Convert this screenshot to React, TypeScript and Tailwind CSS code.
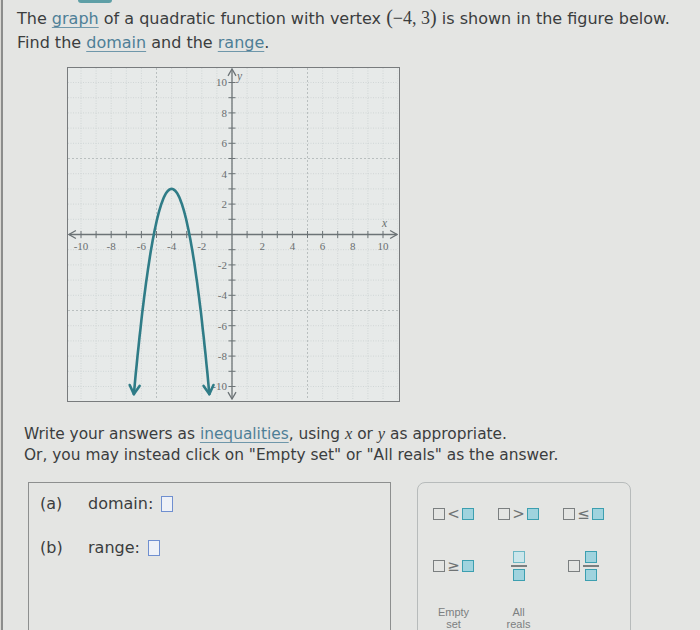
import React from "react";

const OX = 164;
const OY = 166.5;
const UX = 15.1;
const UY = 15.2;
const px = (u: number) => OX + u * UX;
const py = (v: number) => OY - v * UY;

function chevron(tx: number, ty: number, dx: number, dy: number, len: number) {
  const l = Math.hypot(dx, dy);
  const ux = dx / l;
  const uy = dy / l;
  const a = Math.PI / 6;
  const rot = (s: number) => [
    tx - len * (ux * Math.cos(s * a) - uy * Math.sin(s * a)),
    ty - len * (ux * Math.sin(s * a) + uy * Math.cos(s * a)),
  ];
  const [x1, y1] = rot(1);
  const [x2, y2] = rot(-1);
  return `M${x1.toFixed(1)} ${y1.toFixed(1)} L${tx.toFixed(1)} ${ty.toFixed(1)} L${x2.toFixed(1)} ${y2.toFixed(1)}`;
}

function Graph() {
  const f = (u: number) => 3 - 2.16 * (u + 4) * (u + 4);
  const pts: string[] = [];
  for (let i = 0; i <= 80; i++) {
    const u = -6.5 + (5 * i) / 80;
    pts.push(`${px(u).toFixed(1)} ${py(f(u)).toFixed(1)}`);
  }
  const curve = "M" + pts.join(" L");
  const lt = [px(-6.5), py(f(-6.5))];
  const lp = [px(-6.45), py(f(-6.45))];
  const rt = [px(-1.5), py(f(-1.5))];
  const rp = [px(-1.55), py(f(-1.55))];

  const units = Array.from({ length: 23 }, (_, i) => i - 11);
  const evens = [-10, -8, -6, -4, -2, 2, 4, 6, 8, 10];

  return (
    <div className="ml-[64px] mt-[12px] w-[333px] h-[335px] border-[1.5px] border-[#787b7d] bg-[#e7eae9]">
      <svg width="330" height="332" viewBox="0 0 330 332" className="block">
        {units.map((u) => (
          <line
            key={"vx" + u}
            x1={px(u)}
            y1={0}
            x2={px(u)}
            y2={332}
            stroke={Math.abs(u) === 5 ? "#b9bfbf" : "#d0d6d6"}
            strokeWidth={1}
            strokeDasharray={Math.abs(u) === 5 ? "2 2" : "1 1.5"}
          />
        ))}
        {units.map((v) => (
          <line
            key={"hy" + v}
            x1={0}
            y1={py(v)}
            x2={330}
            y2={py(v)}
            stroke={Math.abs(v) === 5 ? "#b9bfbf" : "#d0d6d6"}
            strokeWidth={1}
            strokeDasharray={Math.abs(v) === 5 ? "2 2" : "1 1.5"}
          />
        ))}
        <line x1={1} y1={OY} x2={329} y2={OY} stroke="#6c7376" strokeWidth={1.3} />
        <line x1={OX} y1={1} x2={OX} y2={331} stroke="#6c7376" strokeWidth={1.3} />
        <path d={chevron(1, OY, -1, 0, 8)} stroke="#6c7376" strokeWidth={1.3} fill="none" />
        <path d={chevron(329, OY, 1, 0, 8)} stroke="#6c7376" strokeWidth={1.3} fill="none" />
        <path d={chevron(OX, 1, 0, -1, 8)} stroke="#6c7376" strokeWidth={1.3} fill="none" />
        <path d={chevron(OX, 331, 0, 1, 8)} stroke="#6c7376" strokeWidth={1.3} fill="none" />
        {units
          .filter((u) => u !== 0 && Math.abs(u) <= 10)
          .map((u) => (
            <g key={"t" + u}>
              <line x1={px(u)} y1={OY - 3.5} x2={px(u)} y2={OY + 3.5} stroke="#6c7376" strokeWidth={1} />
              <line x1={OX - 3.5} y1={py(u)} x2={OX + 3.5} y2={py(u)} stroke="#6c7376" strokeWidth={1} />
            </g>
          ))}
        {evens.map((u) => (
          <text
            key={"lx" + u}
            x={px(u)}
            y={OY + 15}
            textAnchor="middle"
            fontSize="11"
            fill="#6a6e70"
            fontFamily="'Liberation Serif', serif"
          >
            {u < 0 ? "-" + Math.abs(u) : u}
          </text>
        ))}
        {evens.map((v) => (
          <text
            key={"ly" + v}
            x={OX - 5}
            y={py(v) + 3.8}
            textAnchor="end"
            fontSize="11"
            fill="#6a6e70"
            fontFamily="'Liberation Serif', serif"
          >
            {v < 0 ? "-" + Math.abs(v) : v}
          </text>
        ))}
        <text x={px(10) - 1} y={OY - 8} fontSize="11.5" fontStyle="italic" fill="#6a6e70" fontFamily="'Liberation Serif', serif">
          x
        </text>
        <text x={OX + 5} y={12} fontSize="11.5" fontStyle="italic" fill="#6a6e70" fontFamily="'Liberation Serif', serif">
          y
        </text>
        <path d={curve} stroke="#2f7c87" strokeWidth={2.6} fill="none" strokeLinecap="round" />
        <path
          d={chevron(lt[0], lt[1], lt[0] - lp[0], lt[1] - lp[1], 10)}
          stroke="#2f7c87"
          strokeWidth={2.6}
          fill="none"
          strokeLinecap="round"
          strokeLinejoin="round"
        />
        <path
          d={chevron(rt[0], rt[1], rt[0] - rp[0], rt[1] - rp[1], 10)}
          stroke="#2f7c87"
          strokeWidth={2.6}
          fill="none"
          strokeLinecap="round"
          strokeLinejoin="round"
        />
      </svg>
    </div>
  );
}

function Box({ filled, light }: { filled?: boolean; light?: boolean }) {
  if (!filled) return <span className="inline-block w-[12px] h-[12px] border border-[#7b7f80] bg-transparent" />;
  return (
    <span
      className={
        light
          ? "inline-block w-[12px] h-[12px] border border-[#6bb7c4] bg-[#cbe6eb]"
          : "inline-block w-[12px] h-[12px] border border-[#3c9fb0] bg-[#9fd3de]"
      }
    />
  );
}

function Rel({ sym }: { sym: string }) {
  return (
    <div className="flex items-center gap-[2px]">
      <Box />
      <span className="text-[15px] leading-none text-[#6f7374] font-['DejaVu_Sans',sans-serif]">{sym}</span>
      <Box filled />
    </div>
  );
}

function Frac({ lightTop }: { lightTop?: boolean }) {
  return (
    <div className="flex flex-col items-center gap-[2px]">
      <Box filled light={lightTop} />
      <span className="block w-[16px] h-[1.5px] bg-[#7b7f80]" />
      <Box filled />
    </div>
  );
}

function Link({ children }: { children: React.ReactNode }) {
  return (
    <span className="text-[#4e7f97] underline decoration-[#6f97aa] underline-offset-[3px]">{children}</span>
  );
}

export default function App() {
  return (
    <div className="h-[630px] overflow-hidden bg-[#d9d8d4] pl-[1px] font-['DejaVu_Sans',sans-serif] text-[#3b3d3e]">
      <div className="h-full border-l-[2px] border-[#8c8d8c] bg-[#e4e5e3]">
        <div className="ml-[75px] h-[3px] w-[34px] rounded-b-[3px] bg-[#5e9fa6]" />

        <div className="pl-[14px] pt-[2px] text-[16px] leading-[24px]">
          <p>
            The <Link>graph</Link> of a quadratic function with vertex{" "}
            <span className="font-['Liberation_Serif',serif] text-[18px]">
              <span className="text-[20px]">(</span>−4, 3<span className="text-[20px]">)</span>
            </span>{" "}
            is shown in the figure below.
          </p>
          <p>
            Find the <Link>domain</Link> and the <Link>range</Link>.
          </p>
        </div>

        <Graph />

        <div className="pl-[21px] mt-[21px] text-[15.4px] leading-[21px]">
          <p>
            Write your answers as <Link>inequalities</Link>, using{" "}
            <span className="font-['Liberation_Serif',serif] italic text-[16.5px]">x</span> or{" "}
            <span className="font-['Liberation_Serif',serif] italic text-[16.5px]">y</span> as appropriate.
          </p>
          <p>Or, you may instead click on "Empty set" or "All reals" as the answer.</p>
        </div>

        <div className="flex mt-[16px] pl-[25px] gap-[26px]">
          <div className="w-[363px] h-[170px] border border-[#8d8f8f] pl-[11px] pt-[9px] text-[16px]">
            <div className="flex items-center h-[24px]">
              <span className="w-[48px]">(a)</span>
              <span>domain:</span>
              <span className="ml-[8px] inline-block w-[12px] h-[16px] border-[1.5px] border-[#6f8fd0] bg-[#eef1f7]" />
            </div>
            <div className="flex items-center h-[24px] mt-[20px]">
              <span className="w-[48px]">(b)</span>
              <span>range:</span>
              <span className="ml-[8px] inline-block w-[12px] h-[16px] border-[1.5px] border-[#6f8fd0] bg-[#eef1f7]" />
            </div>
          </div>

          <div className="w-[214px] h-[170px] border border-[#b7bbbb] rounded-[8px] pl-[3px] pt-[5px]">
            <div className="grid grid-cols-[65px_65px_65px] auto-rows-[52px] items-center justify-items-center">
              <Rel sym="<" />
              <Rel sym=">" />
              <Rel sym="≤" />
              <Rel sym="≥" />
              <Frac lightTop />
              <div className="flex items-center gap-[3px]">
                <Box />
                <Frac />
              </div>
              <div className="text-center text-[11px] leading-[12px] text-[#7c8081] font-['Liberation_Sans',sans-serif]">
                Empty
                <br />
                set
              </div>
              <div className="text-center text-[11px] leading-[12px] text-[#7c8081] font-['Liberation_Sans',sans-serif]">
                All
                <br />
                reals
              </div>
              <div />
            </div>
          </div>
        </div>
      </div>
    </div>
  );
}
